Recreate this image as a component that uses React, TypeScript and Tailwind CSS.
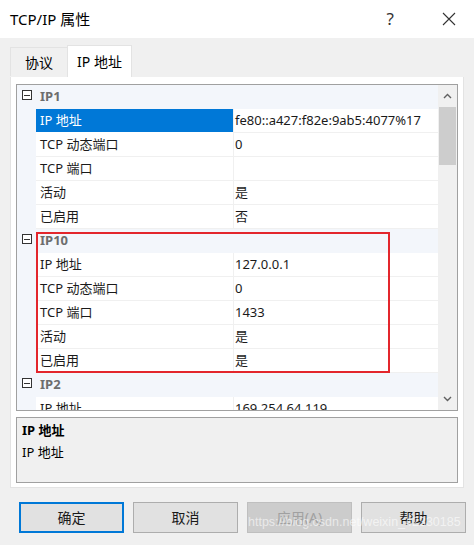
import React from 'react';

// Linhas da grade de propriedades
type Row =
  | { kind: 'cat'; label: string }
  | { kind: 'prop'; name: string; value: string; selected?: boolean };

const ROWS: Row[] = [
  { kind: 'cat', label: 'IP1' },
  { kind: 'prop', name: 'IP 地址', value: 'fe80::a427:f82e:9ab5:4077%17', selected: true },
  { kind: 'prop', name: 'TCP 动态端口', value: '0' },
  { kind: 'prop', name: 'TCP 端口', value: '' },
  { kind: 'prop', name: '活动', value: '是' },
  { kind: 'prop', name: '已启用', value: '否' },
  { kind: 'cat', label: 'IP10' },
  { kind: 'prop', name: 'IP 地址', value: '127.0.0.1' },
  { kind: 'prop', name: 'TCP 动态端口', value: '0' },
  { kind: 'prop', name: 'TCP 端口', value: '1433' },
  { kind: 'prop', name: '活动', value: '是' },
  { kind: 'prop', name: '已启用', value: '是' },
  { kind: 'cat', label: 'IP2' },
  { kind: 'prop', name: 'IP 地址', value: '169.254.64.119' },
];

const FONT = "font-['Noto_Sans','Noto_Sans_CJK_SC',sans-serif]";

function MinusBox() {
  return (
    <div className="w-[10px] h-[10px] border border-[#333] bg-white flex items-center justify-center">
      <div className="w-[6px] h-[1px] bg-[#333]" />
    </div>
  );
}

function GridRow({ row }: { row: Row }) {
  if (row.kind === 'cat') {
    return (
      <div className="flex h-[24px] shrink-0 bg-[#f3f6fb]">
        <div className="w-[19px] flex items-start justify-center pt-[5px] shrink-0">
          <MinusBox />
        </div>
        <div className="flex-1 flex items-center pl-[4px] text-[13px] font-bold text-[#6d6d6d]">{row.label}</div>
      </div>
    );
  }
  return (
    <div className="flex h-[24px] shrink-0">
      <div className="w-[19px] shrink-0 bg-[#f3f6fb]" />
      <div
        className={
          row.selected
            ? 'w-[197px] shrink-0 flex items-center pl-[4px] text-[13px] bg-[#0078d7] text-white border-b border-white'
            : 'w-[197px] shrink-0 flex items-center pl-[4px] text-[13px] text-[#1a1a1a] border-b border-[#f0f0f0]'
        }
      >
        {row.name}
      </div>
      <div className="w-[1px] shrink-0 bg-[#f0f0f0]" />
      <div className="flex-1 flex items-center pl-[1px] text-[13px] text-[#1a1a1a] border-b border-[#f0f0f0] whitespace-nowrap overflow-hidden">
        {row.value}
      </div>
    </div>
  );
}

function Button({ label, focused, disabled }: { label: string; focused?: boolean; disabled?: boolean }) {
  const base = 'w-[105px] h-[31px] flex items-center justify-center text-[14px]';
  if (disabled) return <div className={`${base} bg-[#cccccc] border border-[#bfbfbf] text-[#a0a0a0]`}>{label}</div>;
  if (focused) return <div className={`${base} bg-[#e1e1e1] border-2 border-[#0078d7] text-[#1a1a1a]`}>{label}</div>;
  return <div className={`${base} bg-[#e1e1e1] border border-[#adadad] text-[#1a1a1a]`}>{label}</div>;
}

export default function App() {
  return (
    <div className={`w-[474px] h-[545px] bg-[#f0f0f0] relative overflow-hidden ${FONT}`}>
      {/* Barra de título */}
      <div className="h-[38px] bg-white flex items-center pl-[10px] pr-[18px]">
        <span className="text-[15px] text-black flex-1">TCP/IP 属性</span>
        <span className="text-[17px] text-[#333] mr-[48px]">?</span>
        <svg width="14" height="14" viewBox="0 0 14 14">
          <path d="M1 1 L13 13 M13 1 L1 13" stroke="#333" strokeWidth="1.1" />
        </svg>
      </div>

      {/* Abas */}
      <div className="flex items-end h-[39px] pl-[10px]">
        <div className="h-[29px] w-[57px] flex items-center justify-center text-[14px] text-black border-t border-l border-[#e3e3e3] mb-[1px]">
          协议
        </div>
        <div className="h-[32px] w-[65px] flex items-center justify-center text-[14px] text-black bg-white border-t border-x border-[#e3e3e3]">
          IP 地址
        </div>
      </div>

      {/* Painel */}
      <div className="mx-[10px] h-[411px] bg-white border border-[#e3e3e3] border-t-0 pt-[7px] px-[5px]">
        <div className="relative h-[327px] border border-[#a0a0a0] flex overflow-hidden">
          <div className="flex-1 flex flex-col">
            {ROWS.map((r, i) => (
              <GridRow key={i} row={r} />
            ))}
          </div>
          {/* Barra de rolagem */}
          <div className="w-[19px] shrink-0 bg-[#f0f0f0] flex flex-col items-center">
            <div className="h-[22px] flex items-center justify-center">
              <svg width="9" height="6" viewBox="0 0 9 6">
                <path d="M1 5 L4.5 1.5 L8 5" stroke="#606060" strokeWidth="1.4" fill="none" />
              </svg>
            </div>
            <div className="w-[17px] h-[58px] bg-[#cdcdcd]" />
            <div className="flex-1" />
            <div className="h-[22px] flex items-center justify-center">
              <svg width="9" height="6" viewBox="0 0 9 6">
                <path d="M1 1 L4.5 4.5 L8 1" stroke="#606060" strokeWidth="1.4" fill="none" />
              </svg>
            </div>
          </div>
          {/* Destaque vermelho sobre IP10 */}
          <div className="absolute left-[19px] top-[147px] w-[354px] h-[141px] border-2 border-[#e3262c] pointer-events-none" />
        </div>

        {/* Descrição */}
        <div className="mt-[6px] h-[66px] bg-[#f0f0f0] border border-[#a0a0a0] px-[5px] pt-[1px]">
          <div className="text-[13px] font-bold text-black leading-[22px]">IP 地址</div>
          <div className="text-[13px] text-black leading-[22px]">IP 地址</div>
        </div>
      </div>

      {/* Botões */}
      <div className="flex gap-[9px] pl-[19px] mt-[14px]">
        <Button label="确定" focused />
        <Button label="取消" />
        <Button label="应用(A)" disabled />
        <Button label="帮助" />
      </div>

      {/* Marca d'água */}
      <div className="absolute left-[248px] top-[513px] text-[12.5px] text-white/60 font-['Liberation_Sans',sans-serif] whitespace-nowrap pointer-events-none">
        https://blog.csdn.net/weixin_42330185
      </div>
    </div>
  );
}
